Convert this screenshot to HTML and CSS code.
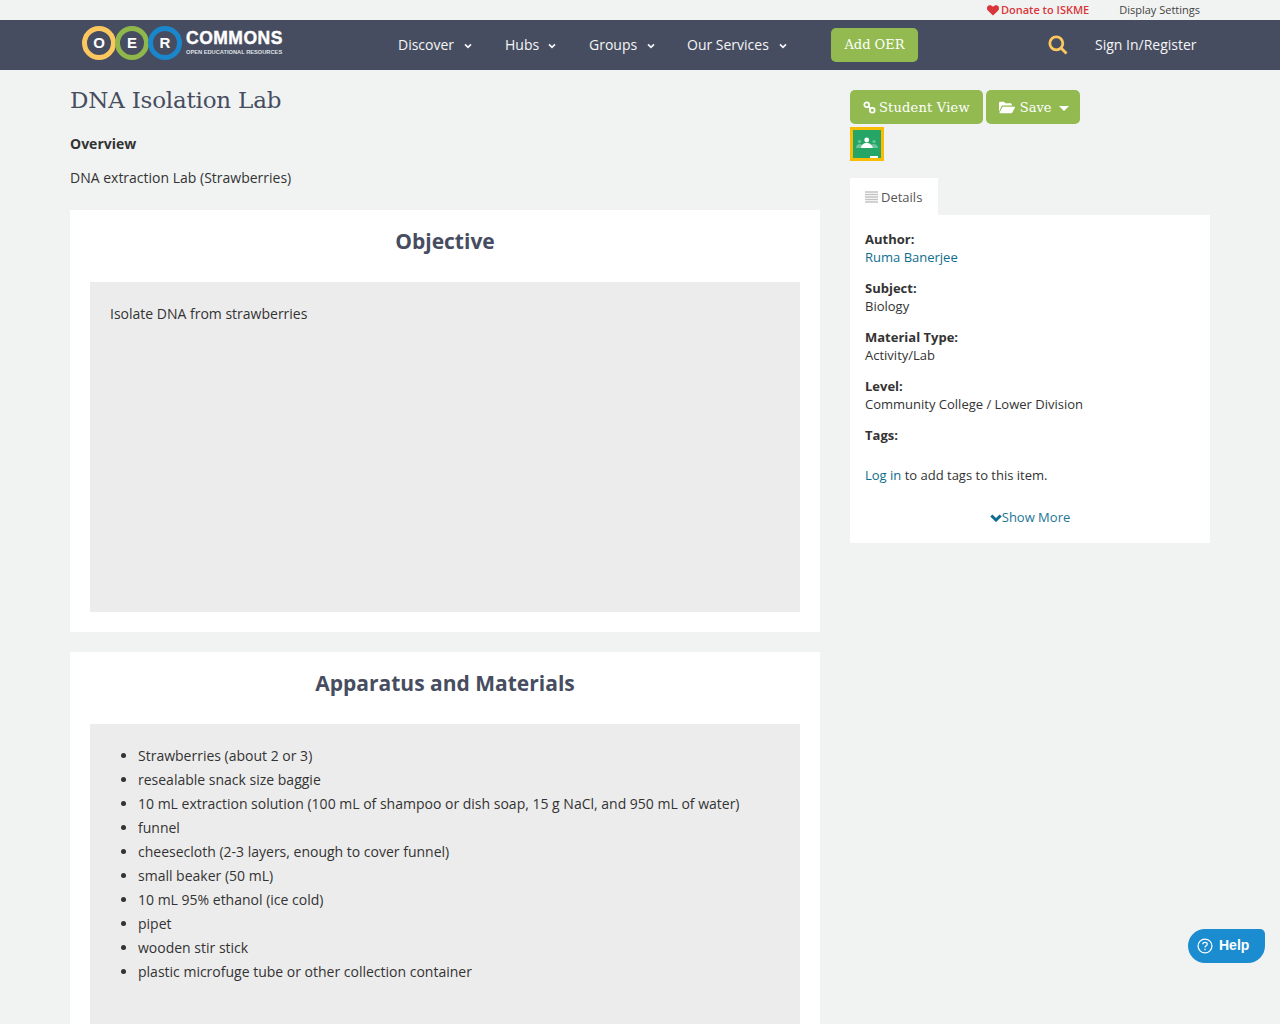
FILE: index.html
```html
<!DOCTYPE html>
<html lang="en">
<head>
<meta charset="utf-8">
<title>DNA Isolation Lab</title>
<link rel="stylesheet" href="styles.css">
</head>
<body>
<div class="topbar">
  <a class="donate"><svg class="heart" viewBox="0 0 12 11"><path d="M6 10.6 1 5.7C-.6 4-.2 1.5 1.6.6 3 0 4.700.3 6 1.900 7.300.3 9 0 10.400.6 12.200 1.500 12.600 4 11 5.700Z"/></svg>Donate to ISKME</a>
  <a class="display">Display Settings</a>
</div>
<header class="nav">
  <div class="logo">
    <span class="ring ring-y">O</span><span class="ring ring-g">E</span><span class="ring ring-b">R</span>
    <div class="logo-text"><span class="logo-main">COMMONS</span><span class="logo-sub">OPEN EDUCATIONAL RESOURCES</span></div>
  </div>
  <nav class="menu">
    <a class="menu-item m1">Discover<svg class="chev" viewBox="0 0 8 6"><path d="M1 1.300 4 4.300 7 1.300"/></svg></a>
    <a class="menu-item m2">Hubs<svg class="chev" viewBox="0 0 8 6"><path d="M1 1.300 4 4.300 7 1.300"/></svg></a>
    <a class="menu-item m3">Groups<svg class="chev" viewBox="0 0 8 6"><path d="M1 1.300 4 4.300 7 1.300"/></svg></a>
    <a class="menu-item m4">Our Services<svg class="chev" viewBox="0 0 8 6"><path d="M1 1.300 4 4.300 7 1.300"/></svg></a>
  </nav>
  <a class="btn add">Add OER</a>
  <svg class="search" viewBox="0 0 20 20"><circle cx="8.300" cy="8.300" r="6.500"/><path d="M13 13 18.500 18.500"/></svg>
  <a class="sign">Sign In/Register</a>
</header>
<div class="page">
  <main class="main">
    <h1>DNA Isolation Lab</h1>
    <p class="overview-h">Overview</p>
    <p class="overview">DNA extraction Lab (Strawberries)</p>
    <section class="card">
      <h2>Objective</h2>
      <div class="well well-obj"><p>Isolate DNA from strawberries</p></div>
    </section>
    <section class="card">
      <h2>Apparatus and Materials</h2>
      <div class="well">
        <ul>
          <li>Strawberries (about 2 or 3)</li>
          <li>resealable snack size baggie</li>
          <li>10 mL extraction solution (100 mL of shampoo or dish soap, 15 g NaCl, and 950 mL of water)</li>
          <li>funnel</li>
          <li>cheesecloth (2-3 layers, enough to cover funnel)</li>
          <li>small beaker (50 mL)</li>
          <li>10 mL 95% ethanol (ice cold)</li>
          <li>pipet</li>
          <li>wooden stir stick</li>
          <li>plastic microfuge tube or other collection container</li>
        </ul>
      </div>
    </section>
  </main>
  <aside class="side">
    <div class="actions">
      <a class="btn student"><svg class="link-i" viewBox="0 0 14 14"><circle cx="4" cy="4" r="2.600"/><circle cx="10" cy="10" r="2.600"/><path d="M5.500 5.500 8.500 8.500"/></svg>Student View</a>
      <a class="btn save"><svg class="folder" viewBox="0 0 16 13"><path d="M0 11V2C0 1.200.6.700 1.300.7H5L6.300 2.200H11.500C12.300 2.200 12.800 2.800 12.800 3.500V4.600H3.600C3 4.600 2.600 4.900 2.300 5.400Z"/><path d="M3.600 5.700H15.400C16 5.700 16.200 6.200 15.900 6.700L13.300 11.500C13.100 11.900 12.700 12.200 12.200 12.200H1C.5 12.200.3 11.800.6 11.300Z"/></svg>Save<span class="caret"></span></a>
    </div>
    <div class="classroom">
      <svg viewBox="0 0 28 28"><rect width="28" height="28" fill="#25a667"/><circle cx="6.500" cy="11.500" r="1.600" fill="#6cc598"/><circle cx="21" cy="11.500" r="1.600" fill="#6cc598"/><path d="M3 18c0-2.500 1.800-4 3.500-4s4 1.500 4 4ZM17 18c0-2.500 2.300-4 4-4s4 1.500 4 4Z" fill="#6cc598"/><circle cx="13.700" cy="10" r="2.400" fill="#fff"/><path d="M8 18c0-3 2.700-5 5.700-5s6 2 6 5Z" fill="#fff"/><rect x="17" y="26" width="8" height="2" fill="#fff"/></svg>
    </div>
    <div class="tab"><svg class="list-i" viewBox="0 0 13 12"><path d="M0 1h13M0 3.500h13M0 6h13M0 8.500h13M0 11h13" /></svg>Details</div>
    <div class="panel">
      <div class="field"><b>Author:</b><a class="link">Ruma Banerjee</a></div>
      <div class="field"><b>Subject:</b><span>Biology</span></div>
      <div class="field"><b>Material Type:</b><span>Activity/Lab</span></div>
      <div class="field"><b>Level:</b><span>Community College / Lower Division</span></div>
      <div class="field tags"><b>Tags:</b></div>
      <p class="login"><a class="link">Log in</a> to add tags to this item.</p>
      <a class="more"><svg class="more-i" viewBox="0 0 12 8"><path d="M1.300 1.500 6 6 10.700 1.500"/></svg>Show More</a>
    </div>
  </aside>
</div>
<a class="help"><svg class="help-i" viewBox="0 0 18 18"><circle cx="9" cy="9" r="7.800"/><path d="M6.500 7C6.500 5.500 7.700 4.800 9 4.800 10.400 4.800 11.500 5.600 11.500 6.900 11.500 8.600 9 8.700 9 10.600"/><path d="M9 12.200V13.700"/></svg>Help</a>
</body>
</html>
```
FILE: styles.css
```css
* { box-sizing: border-box; }
html, body { margin: 0; height: 1024px; overflow: hidden; }
body { background: #f1f3f2; color: #333; font: 14px/24px "Open Sans", sans-serif; }
p, h1, h2, ul { margin: 0; }

.topbar { height: 20px; display: flex; justify-content: flex-end; align-items: center; font-size: 11px; line-height: 20px; padding-right: 80px; }
.donate { color: #d9363b; display: flex; align-items: center; margin-right: 30px; font-weight: 600; }
.heart { width: 12px; height: 11px; fill: #d9363b; margin-right: 2px; }
.display { color: #444; }

.nav { height: 50px; background: #474d60; color: #f4f5f6; display: flex; align-items: center; position: relative; }
.logo { display: flex; align-items: center; margin-left: 82px; width: 203px; height: 34px; margin-top: -5px; }
.ring { width: 34px; height: 34px; border-radius: 50%; border: 5px solid; display: flex; align-items: center; justify-content: center; font: 700 15px "Liberation Sans", sans-serif; color: #fff; margin-right: -1px; background: #474d60; flex: none; }
.ring-y { border-color: #fcc75f; }
.ring-g { border-color: #8fb74b; }
.ring-b { border-color: #1a86cb; }
.logo-text { display: flex; flex-direction: column; margin-left: 5px; color: #fff; font-family: "Liberation Sans", sans-serif; }
.logo-main { font-size: 17.500px; line-height: 16px; font-weight: 700; white-space: nowrap; -webkit-text-stroke: .4px #fff; letter-spacing: .5px; }
.logo-sub { font-size: 5.700px; line-height: 8px; font-weight: 700; white-space: nowrap; color: #dfe1e5; margin-top: 2px; }

.menu { display: flex; margin-left: 113px; }
.menu-item { display: flex; align-items: center; white-space: nowrap; }
.m1 { width: 107px; }
.m2 { width: 84px; }
.m3 { width: 98px; }
.chev { width: 8px; height: 6px; margin-left: 10px; margin-top: 2px; fill: none; stroke: #f4f5f6; stroke-width: 1.700; }
.m2 .chev { margin-left: 9px; }

.btn { background: #92ba50; color: #fff; border-radius: 5px; font-family: "DejaVu Serif", serif; display: flex; align-items: center; white-space: nowrap; }
.add { position: absolute; left: 831px; top: 8px; width: 87px; height: 34px; justify-content: center; font-size: 13px; }
.search { position: absolute; left: 1048px; top: 15px; width: 20px; height: 20px; fill: none; stroke: #fcc75f; stroke-width: 2.800; }
.sign { position: absolute; left: 1095px; top: 13px; }

.page { display: flex; gap: 30px; padding: 0 70px; align-items: flex-start; }
.main { width: 750px; flex: none; }
h1 { font: 400 23px/30px "DejaVu Serif", serif; color: #474d60; margin-top: 15px; letter-spacing: -.2px; }
.overview-h { font-weight: 700; margin-top: 17px; line-height: 24px; }
.overview { margin-top: 10px; margin-bottom: 20px; }
.card { background: #fff; padding: 19px 20px 20px; margin-bottom: 20px; }
h2 { font-size: 21px; line-height: 24px; font-weight: 700; color: #474d60; text-align: center; margin-bottom: 29px; }
.well { background: #ececec; padding: 20px; }
.well-obj { height: 330px; }
.well ul { padding-left: 28px; }
.well { min-height: 330px; }

.side { width: 360px; flex: none; padding-top: 20px; }
.actions { display: flex; gap: 3px; }
.student, .save { height: 34px; font-size: 13px; padding-top: 1px; }
.student { padding-left: 13px; padding-right: 13px; letter-spacing: .2px; }
.save { padding-left: 13px; padding-right: 11px; }
.link-i { width: 13px; height: 13px; margin-right: 3px; fill: none; stroke: #fff; stroke-width: 1.800; }
.folder { width: 16px; height: 13px; fill: #fff; margin-right: 5px; }
.caret { border-top: 5px solid #fff; border-left: 5px solid transparent; border-right: 5px solid transparent; margin-left: 7px; margin-top: 2px; }
.classroom { width: 34px; height: 34px; border: 3px solid #fbbc05; margin-top: 3px; }
.classroom svg { display: block; width: 28px; height: 28px; }
.tab { width: 88px; height: 37px; background: #fff; margin-top: 17px; font-size: 13px; line-height: 38px; color: #555; padding-left: 15px; display: flex; align-items: center; }
.list-i { width: 13px; height: 12px; stroke: #c4c4c4; stroke-width: 1.400; margin-right: 3px; fill: none; }
.panel { background: #fff; padding: 15px 15px 15px; height: 328px; font-size: 13px; line-height: 18px; color: #333; }
.field { margin-bottom: 13px; display: flex; flex-direction: column; align-items: flex-start; }
.field b { font-weight: 700; }
.link { color: #0e6d8e; }
.tags { margin-bottom: 22px; }
.login { margin-bottom: 24px; }
.more { display: flex; justify-content: center; align-items: center; color: #1c7595; }
.more-i { width: 12px; height: 8px; fill: none; stroke: #0e6d8e; stroke-width: 3; margin-top: 2px; }

.help { position: fixed; left: 1188px; top: 929px; width: 77px; height: 34px; background: #1a8ccf; color: #fff; border-radius: 17px 5px 17px 17px; font: 700 14px "Liberation Sans", sans-serif; display: flex; align-items: center; padding-left: 9px; padding-bottom: 2px; }
.help-i { width: 16px; height: 16px; fill: none; stroke: #fff; stroke-width: 1.400; margin-right: 6px; margin-top: 2px; }
```
